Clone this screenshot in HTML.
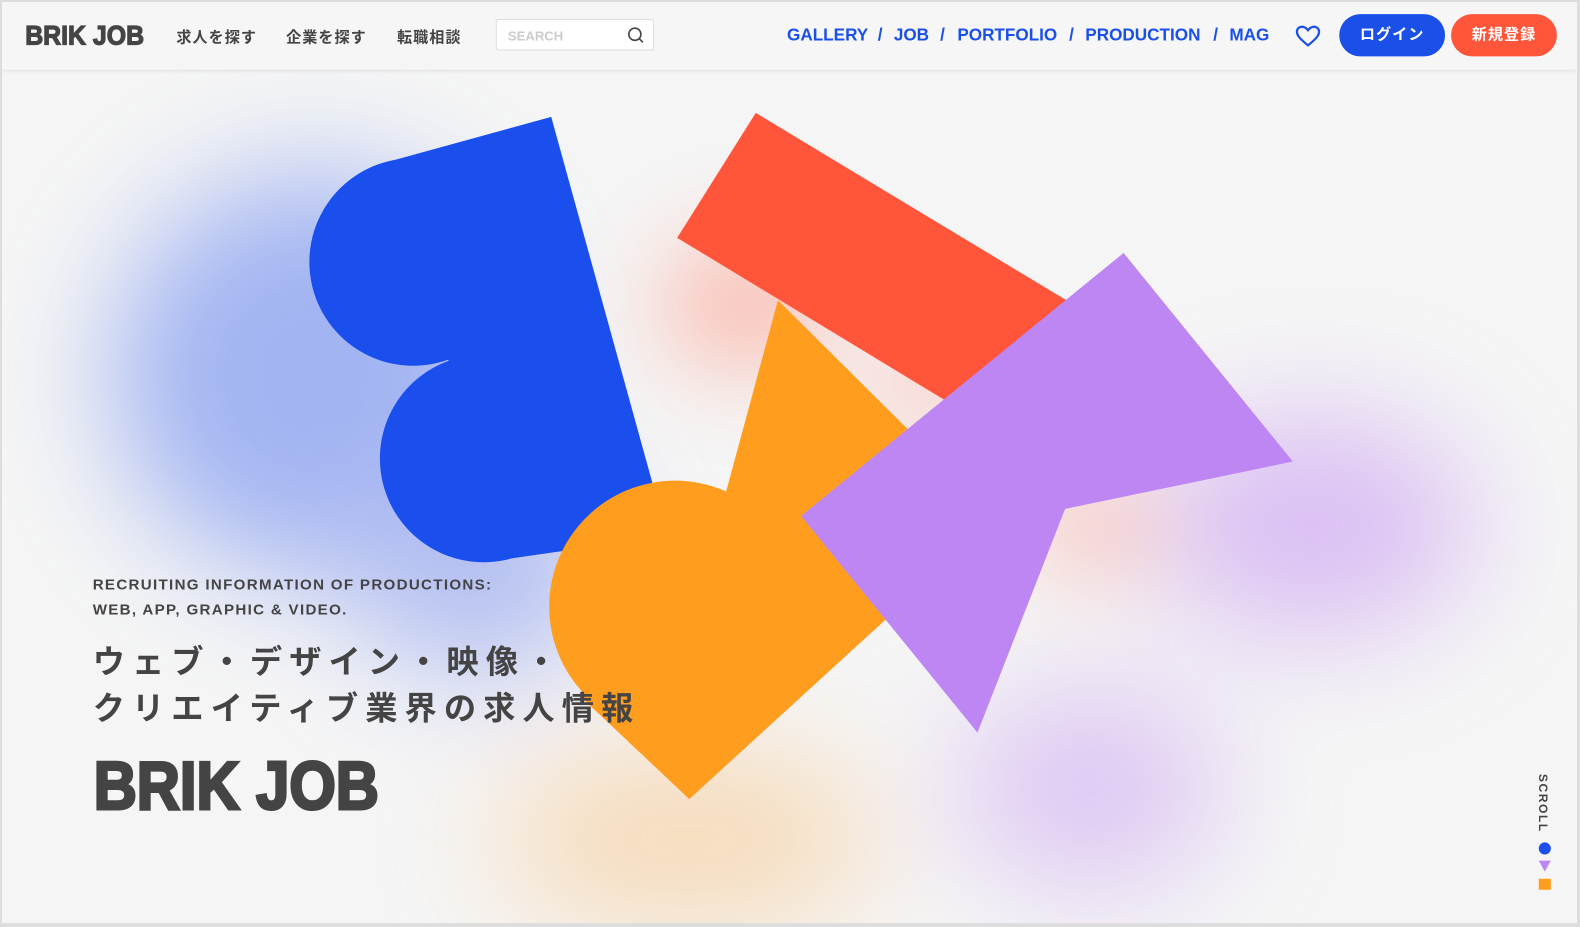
<!DOCTYPE html>
<html><head><meta charset="utf-8"><style>
*{margin:0;padding:0;box-sizing:border-box}
body{width:1580px;height:926px;overflow:hidden;background:#ddd;font-family:"Liberation Sans","Noto Sans CJK JP",sans-serif}
#wrap{position:absolute;left:0;top:0;width:1568px;height:920px;transform:scale(1.0077);transform-origin:0 0}
#page{position:absolute;left:2px;top:2px;width:1563px;height:914px;background:#f5f5f5;overflow:hidden}
header{position:absolute;left:0;top:0;width:100%;height:67px;background:#f6f6f6;box-shadow:0 2px 4px rgba(0,0,0,.08);z-index:5}
.nav a{position:absolute;top:24px;font-size:15px;color:#444;text-decoration:none;font-weight:bold;letter-spacing:1px}
.search{position:absolute;left:490px;top:17px;width:157px;height:31px;border:1px solid #ddd;background:#fff;border-radius:2px}
.search span{position:absolute;left:11px;top:8px;font-size:13px;color:#ccc;font-weight:bold}
.rn{position:absolute;top:23px;font-size:17px;font-weight:bold;color:#1a4fe8;white-space:nowrap}
.btn{position:absolute;top:12px;height:42px;width:105px;border-radius:21px;color:#fff;font-weight:bold;font-size:15px;text-align:center;line-height:42px;letter-spacing:1px}
.t1{position:absolute;left:90px;top:566px;font-size:15px;font-weight:bold;color:#444;line-height:25px;letter-spacing:1.3px}
.t2{position:absolute;left:90px;top:632px;font-size:32px;font-weight:bold;color:#444;line-height:46px;letter-spacing:7px;white-space:nowrap}
.scroll{position:absolute;left:1522px;top:766px;font-size:12px;font-weight:bold;color:#444;writing-mode:vertical-rl;letter-spacing:1.5px}
</style></head><body><div id="wrap"><div id="page">
<svg width="1563" height="914" style="position:absolute;left:0;top:0">
<defs>
<filter id="b1" x="-50%" y="-50%" width="200%" height="200%"><feGaussianBlur stdDeviation="60"/></filter>
<filter id="b2" x="-50%" y="-50%" width="200%" height="200%"><feGaussianBlur stdDeviation="45"/></filter>
</defs>
<g filter="url(#b1)" opacity=".55">
<ellipse cx="310" cy="370" rx="200" ry="200" fill="#5f7ff0"/>
<ellipse cx="470" cy="560" rx="130" ry="110" fill="#7d92ef"/>
<ellipse cx="1300" cy="520" rx="160" ry="110" fill="#c493f2"/>
<ellipse cx="1080" cy="780" rx="130" ry="100" fill="#c9a1f3"/>
<ellipse cx="680" cy="830" rx="190" ry="90" fill="#f8c68a"/>
</g>
<g filter="url(#b2)" opacity=".45">
<ellipse cx="740" cy="300" rx="90" ry="70" fill="#ff8670"/>
<ellipse cx="1080" cy="520" rx="70" ry="50" fill="#ff9a8a"/>
<ellipse cx="920" cy="380" rx="60" ry="50" fill="#ff9a8a"/>
</g>
<g fill="#1a4fee">
<circle cx="408" cy="258" r="103"/>
<circle cx="478" cy="453" r="103"/>
<polygon points="385,158 545,114 660,530 478,556 478,453 408,258"/>
</g>
<polygon fill="#ff553a" points="670,234 748,110 1058,297 980,422"/>
<g fill="#ff9d1f">
<circle cx="668" cy="600" r="125"/>
<polygon points="770,296 900,425 880,610 682,791 575,690 600,520 718,488"/>
</g>
<polygon fill="#bd86f3" points="1113,249 1281,456 1055,503 968,725 793,510"/>
<text x="91" y="801" font-family="Liberation Sans, sans-serif" font-weight="bold" font-size="67" fill="#444" stroke="#444" stroke-width="3" textLength="283" lengthAdjust="spacingAndGlyphs">BRIK JOB</text>
</svg>
<header>
<svg width="150" height="67" style="position:absolute;left:0;top:0"><text x="23" y="42" font-family="Liberation Sans, sans-serif" font-weight="bold" font-size="27" fill="#444" stroke="#444" stroke-width="1.2" textLength="118" lengthAdjust="spacingAndGlyphs">BRIK JOB</text></svg>
<div class="nav"><a style="left:173px">求人を探す</a><a style="left:282px">企業を探す</a><a style="left:392px">転職相談</a></div>
<div class="search"><span>SEARCH</span>
<svg width="18" height="18" style="position:absolute;right:8px;top:6px" fill="none" stroke="#444" stroke-width="1.6"><circle cx="8" cy="8" r="6"/><path d="M12.5 12.5L16 16"/></svg></div>
<span class="rn" style="left:779px">GALLERY</span><span class="rn" style="left:869px">/</span>
<span class="rn" style="left:885px">JOB</span><span class="rn" style="left:931px">/</span>
<span class="rn" style="left:948px">PORTFOLIO</span><span class="rn" style="left:1059px">/</span>
<span class="rn" style="left:1075px">PRODUCTION</span><span class="rn" style="left:1202px">/</span>
<span class="rn" style="left:1218px">MAG</span>
<svg width="26" height="24" style="position:absolute;left:1283px;top:22px" fill="none" stroke="#1a4fe8" stroke-width="2.2"><path d="M13 21 C3 13 2 10 2 7.5 C2 4.5 4.5 2.5 7 2.5 C9.5 2.5 11.5 4 13 6 C14.5 4 16.5 2.5 19 2.5 C21.5 2.5 24 4.5 24 7.5 C24 10 23 13 13 21Z"/></svg>
<div class="btn" style="left:1327px;background:#1a4fe8">ログイン</div>
<div class="btn" style="left:1438px;background:#ff553a">新規登録</div>
</header>
<div class="t1">RECRUITING INFORMATION OF PRODUCTIONS:<br>WEB, APP, GRAPHIC &amp; VIDEO.</div>
<div class="t2">ウェブ・デザイン・映像・<br>クリエイティブ業界の求人情報</div>
<div class="scroll">SCROLL</div>
<div style="position:absolute;left:1525px;top:834px;width:12px;height:12px;border-radius:50%;background:#1a4fee"></div>
<div style="position:absolute;left:1525px;top:852px;width:0;height:0;border-left:6px solid transparent;border-right:6px solid transparent;border-top:11px solid #bd86f3"></div>
<div style="position:absolute;left:1525px;top:870px;width:12px;height:11px;background:#ff9d1f"></div>
</div></div></body></html>
